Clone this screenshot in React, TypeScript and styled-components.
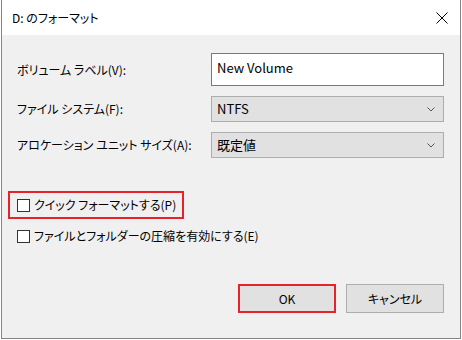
import styled, { createGlobalStyle } from "styled-components";

const GlobalStyle = createGlobalStyle`
  html, body {
    margin: 0;
    padding: 0;
    background: #ffffff;
  }
  body {
    font-family: "Noto Sans CJK JP", "Noto Sans", sans-serif;
    font-feature-settings: "palt";
    font-size: 12px;
    color: #000000;
  }
`;

const Window = styled.div`
  width: 458px;
  height: 338px;
  margin-left: 1px;
  border: 1px solid #858585;
  border-top: none;
  background: #f0f0f0;
  display: flex;
  flex-direction: column;
`;

const TitleBar = styled.div`
  height: 35px;
  background: #ffffff;
  display: flex;
  align-items: center;
  justify-content: space-between;
  padding: 0 12px 0 10px;
`;

const Title = styled.div`
  font-size: 12px;
  line-height: 16px;
`;

const CloseIcon = styled.svg`
  width: 12px;
  height: 12px;
`;

const Body = styled.div`
  flex: 1;
  padding: 18px 16px 0 15px;
  display: flex;
  flex-direction: column;
`;

const Form = styled.div`
  display: grid;
  grid-template-columns: 194px 233px;
  grid-template-rows: 33px 26px 26px;
  row-gap: 10px;
  align-items: center;
`;

const Label = styled.div`
  font-size: 12px;
  line-height: 16px;
  white-space: nowrap;
`;

const TextBox = styled.div`
  height: 33px;
  box-sizing: border-box;
  border: 1px solid #7a7a7a;
  background: #ffffff;
  padding: 0 5px 3px;
  display: flex;
  align-items: center;
  font-size: 13px;
  line-height: 16px;
`;

const Combo = styled.div`
  height: 26px;
  box-sizing: border-box;
  border: 1px solid #adadad;
  background: #e1e1e1;
  padding: 0 8px 0 5px;
  display: flex;
  align-items: center;
  justify-content: space-between;
  font-size: 13px;
  line-height: 16px;
`;

const Chevron = styled.svg`
  width: 8px;
  height: 5px;
`;

const Options = styled.div`
  margin-top: 33px;
  margin-left: -9px;
  display: flex;
  flex-direction: column;
  gap: 3px;
  align-items: flex-start;
`;

const CheckRow = styled.div<{ $highlight?: boolean }>`
  height: 28px;
  box-sizing: border-box;
  border: 2px solid ${(p) => (p.$highlight ? "#e8222b" : "transparent")};
  padding: 0 6px 0 7px;
  display: flex;
  align-items: center;
  gap: 4px;
  font-size: 12px;
  line-height: 16px;
  white-space: nowrap;
`;

const Box = styled.span`
  width: 13px;
  height: 13px;
  box-sizing: border-box;
  border: 1px solid #333333;
  background: #ffffff;
  flex: none;
`;

const Footer = styled.div`
  margin-top: auto;
  margin-bottom: 25px;
  display: flex;
  justify-content: flex-end;
  gap: 10px;
`;

const Button = styled.div<{ $highlight?: boolean }>`
  width: 98px;
  height: 29px;
  box-sizing: border-box;
  border: ${(p) => (p.$highlight ? "2px solid #e8222b" : "1px solid #adadad")};
  background: #e1e1e1;
  display: flex;
  align-items: center;
  justify-content: center;
  font-size: 12px;
  line-height: 16px;
`;

export default function App() {
  return (
    <>
      <GlobalStyle />
      <Window>
        <TitleBar>
          <Title>D: のフォーマット</Title>
          <CloseIcon viewBox="0 0 12 12">
            <path d="M0.5 0.5 L11.5 11.5 M11.5 0.5 L0.5 11.5" stroke="#000" strokeWidth="1" fill="none" />
          </CloseIcon>
        </TitleBar>
        <Body>
          <Form>
            <Label>ボリューム ラベル(V):</Label>
            <TextBox>New Volume</TextBox>
            <Label>ファイル システム(F):</Label>
            <Combo>
              NTFS
              <Chevron viewBox="0 0 8 5">
                <polyline points="0.5,0.5 4,4 7.5,0.5" stroke="#555" strokeWidth="1" fill="none" />
              </Chevron>
            </Combo>
            <Label>アロケーション ユニット サイズ(A):</Label>
            <Combo>
              既定値
              <Chevron viewBox="0 0 8 5">
                <polyline points="0.5,0.5 4,4 7.5,0.5" stroke="#555" strokeWidth="1" fill="none" />
              </Chevron>
            </Combo>
          </Form>
          <Options>
            <CheckRow $highlight>
              <Box />
              クイック フォーマットする(P)
            </CheckRow>
            <CheckRow>
              <Box />
              ファイルとフォルダーの圧縮を有効にする(E)
            </CheckRow>
          </Options>
          <Footer>
            <Button $highlight>OK</Button>
            <Button>キャンセル</Button>
          </Footer>
        </Body>
      </Window>
    </>
  );
}
